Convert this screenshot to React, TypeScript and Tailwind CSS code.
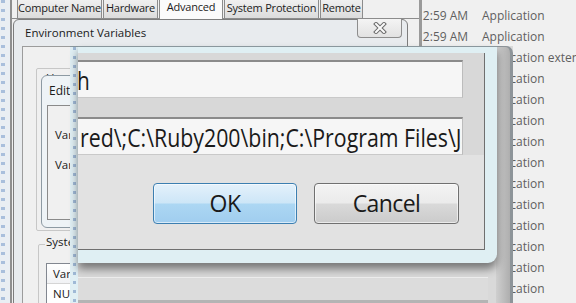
import React from "react";

const events = [
  "Application",
  "Application",
  "Application extension",
  "Application",
  "Application",
  "Application",
  "Application",
  "Application",
  "Application",
  "Application",
  "Application",
  "Application",
  "Application",
  "Application",
];

const tabs = [
  { label: "Computer Name", w: "w-[85px]" },
  { label: "Hardware", w: "w-[55px]" },
  { label: "Advanced", w: "w-[64px]", active: true },
  { label: "System Protection", w: "w-[95px]" },
  { label: "Remote", w: "w-[43px]" },
];

const EventList = () => (
  <div className="absolute left-[416px] top-[5px] flex flex-col text-[12px] text-[#5f5f5f]">
    {events.map((e, i) => (
      <div key={i} className="flex h-[21px] items-center whitespace-nowrap">
        <span className="w-[66px]">12:59 AM</span>
        <span>{e}</span>
      </div>
    ))}
  </div>
);

const SystemProperties = () => (
  <div className="absolute left-0 top-0 flex h-full w-[422px] border-r-[3px] border-r-[#9a9a9a] bg-[#f0f0f0]">
    {/* glass edge */}
    <div className="flex h-full w-[10px] bg-[#e9eef3] pl-[1px]">
      <div className="h-full w-[4px] bg-[repeating-linear-gradient(to_bottom,#a9bfdc_0px,#a9bfdc_3px,#e9eef3_3px,#e9eef3_9px)]" />
    </div>
    <div className="h-full w-[2px] bg-[#8f8f8f]" />
    <div className="flex flex-1 flex-col">
      <div className="flex h-[19px] items-end gap-[1px] border-b border-[#8c8c8c] pl-[5px]">
        {tabs.map((t) => (
          <div
            key={t.label}
            className={
              t.active
                ? `${t.w} -mb-[1px] flex h-[20px] items-start justify-center whitespace-nowrap border-x border-[#8c8c8c] bg-[#fbfbfb] text-[11px] leading-[15px] tracking-[-0.2px] text-[#1c1c1c]`
                : `${t.w} flex h-[19px] items-center justify-center whitespace-nowrap border-x border-[#8c8c8c] bg-[linear-gradient(to_bottom,#f1f1f1,#dcdcdc)] text-[11px] tracking-[-0.2px] text-[#1c1c1c]`
            }
          >
            {t.label}
          </div>
        ))}
      </div>
    </div>
  </div>
);

const CloseGlyph = () => (
  <svg width="14" height="12" viewBox="0 0 14 12">
    <path d="M3 2 L11 10 M11 2 L3 10" stroke="#6a6a6a" strokeWidth="4" strokeLinecap="square" />
    <path d="M3 2 L11 10 M11 2 L3 10" stroke="#fafafa" strokeWidth="2" strokeLinecap="square" />
  </svg>
);

const EnvWindow = () => (
  <div className="absolute left-[13px] top-[19px] flex h-[300px] w-[395px] flex-col rounded-t-[6px] border border-[#7d7d7d] bg-[#e8ebee]">
    <div className="relative flex h-[26px] shrink-0 items-center pl-[11px] text-[11.5px] text-[#1a1a1a]">
      Environment Variables
      <div className="absolute right-[5px] top-[-1px] flex h-[19px] w-[45px] items-center justify-center rounded-b-[4px] border border-t-0 border-[#8d8d8d] bg-[linear-gradient(to_bottom,#f4f4f4,#e2e2e2)]">
        <CloseGlyph />
      </div>
    </div>
    <div className="ml-[8px] flex flex-1 flex-col border-l border-t border-[#9c9c9c] bg-[#f0f0f0] pl-[13px] pt-[21px]">
      {/* user variables group with edit window on top */}
      <div className="relative h-[163px] w-[200px] rounded-[2px] border border-[#c7c7c7]">
        <span className="absolute left-[8px] top-[3px] bg-[#f0f0f0] px-[1px] text-[11.5px] leading-none text-[#1a1a1a]">
          User variables for admin
        </span>
        <div className="absolute left-[4px] top-[6px] flex h-[153px] w-[220px] flex-col rounded-t-[6px] rounded-bl-[6px] border border-[#8d9aa3] bg-[#eef3f6]">
          <div className="flex h-[29px] shrink-0 items-center pl-[7px] text-[12px] text-[#1a1a1a]">
            Edit User Variable
          </div>
          <div className="mb-[7px] ml-[5px] flex flex-1 flex-col gap-[13px] border border-[#8a8a8a] bg-[#f0f0f0] pl-[7px] pt-[20px] text-[11.5px] text-[#1a1a1a]">
            <span>Variable name:</span>
            <span>Variable value:</span>
          </div>
        </div>
      </div>
      {/* system variables group */}
      <div className="relative ml-[2px] mt-[13px] h-[200px] w-[300px] rounded-[2px] border border-[#c7c7c7] pl-[7px] pt-[18px]">
        <span className="absolute left-[6px] top-[-9px] bg-[#f0f0f0] px-[1px] text-[11.5px] leading-none text-[#1a1a1a]">
          System variables
        </span>
        <div className="flex flex-col border border-[#828790] bg-white text-[11.5px] text-[#1a1a1a]">
          <div className="flex h-[20px] items-center border-b border-[#d5d5d5] bg-[linear-gradient(to_bottom,#ffffff,#f1f2f4)] pl-[6px]">
            Variable
          </div>
          <div className="flex h-[20px] items-center pl-[6px]">NUMBER_OF_PROCESSORS</div>
        </div>
      </div>
    </div>
  </div>
);

const BackWindow = () => (
  <div className="absolute left-[70px] top-[46px] flex h-[257px] w-[443px] bg-[#d9d9d9]">
    <div className="flex h-full w-[8px] border-t border-[#8a979d] bg-[#e0eff4] pl-[3px]">
      <div className="h-full w-[3px] bg-[repeating-linear-gradient(to_bottom,#9fb9d6_0px,#9fb9d6_3px,#e0eff4_3px,#e0eff4_9px)]" />
    </div>
    <div className="flex flex-1 flex-col justify-end">
      <div className="mr-[8px] h-[26px] border-t border-[#eeeeee] border-b-[3px] border-b-[#b4b4b4] bg-[#dcdcdc]" />
    </div>
    <div className="h-full w-[17px] rounded-tr-[7px] border-r-[3px] border-t border-[#8d9499] bg-[linear-gradient(to_right,#cfcfcf,#aeaeae)]" />
  </div>
);

const EditDialog = () => (
  <div className="absolute left-[78px] top-[46px] flex h-[217px] w-[419px] flex-col rounded-br-[9px] border-t border-[#8a979d] bg-[#dfeff3] pb-[13px] pr-[12px] pt-[6px] shadow-[0_6px_8px_rgba(0,0,0,0.45)]">
    <div className="flex flex-1 flex-col border-b border-r border-[#6f6f6f] bg-[#e2e2e2]">
      <div className="flex flex-col bg-[#d8d8d8] pt-[7px] text-[26px] leading-none text-[#1a1a1a]">
        <div className="flex h-[38px] w-[385px] items-center overflow-hidden whitespace-nowrap border-b border-r border-t-2 border-b-[#c9c9c9] border-r-[#bcbcbc] border-t-[#8b8b8b] bg-[#f6f6f6]">
          <span className="-ml-[1px] origin-left scale-x-[0.8]">h</span>
        </div>
        <div className="h-[19px]" />
        <div className="flex h-[38px] w-[385px] items-center overflow-hidden whitespace-nowrap border-b border-r border-t-2 border-b-[#c9c9c9] border-r-[#bcbcbc] border-t-[#8b8b8b] bg-[#f6f6f6] pl-[2px]">
          <span className="origin-left scale-x-[0.82]">{"red\\;C:\\Ruby200\\bin;C:\\Program Files\\Java"}</span>
        </div>
      </div>
      <div className="flex gap-[17px] pl-[75px] pt-[28px] text-[23px] tracking-[-0.6px] text-[#1a1a1a]">
        <div className="flex h-[41px] w-[144px] items-center justify-center rounded-[4px] border border-[#3c7fb1] bg-[linear-gradient(to_bottom,#e4f1fb_0%,#cde6f7_48%,#acd7f3_52%,#a0cdef_100%)] shadow-[inset_0_0_0_1px_rgba(255,255,255,0.6)]">
          OK
        </div>
        <div className="flex h-[41px] w-[145px] items-center justify-center rounded-[4px] border border-[#707070] bg-[linear-gradient(to_bottom,#f3f3f3_0%,#ebebeb_48%,#d9d9d9_52%,#cbcbcb_100%)] shadow-[inset_0_0_0_1px_rgba(255,255,255,0.6)]">
          Cancel
        </div>
      </div>
    </div>
  </div>
);

export default function App() {
  return (
    <div className="relative h-[303px] w-[576px] overflow-hidden bg-[#f0f0f0] font-['Open_Sans',sans-serif]">
      <EventList />
      <SystemProperties />
      <EnvWindow />
      <BackWindow />
      <EditDialog />
    </div>
  );
}
